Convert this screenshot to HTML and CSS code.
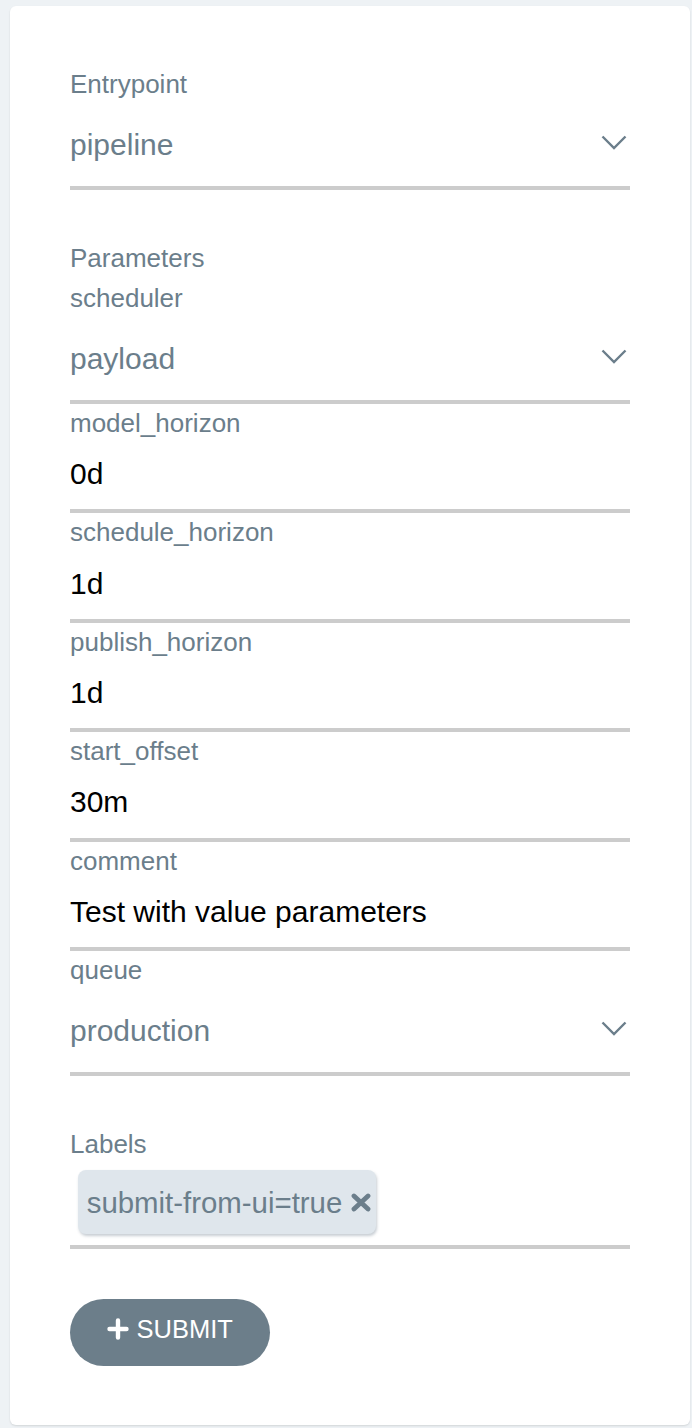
FILE: index.html
```html
<!DOCTYPE html>
<html lang="en">
<head>
<meta charset="utf-8">
<title>Submit</title>
<link rel="stylesheet" href="styles.css">
</head>
<body>
<form class="card">
  <section class="section">
    <div class="field">
      <div class="label">Entrypoint</div>
      <div class="control select">
        <span class="select-value">pipeline</span>
        <svg class="chevron" width="26" height="15" viewBox="0 0 26 15"><path d="M1.5 1.5 L13 13 L24.5 1.5" fill="none" stroke="#6b7e8b" stroke-width="2.4"/></svg>
      </div>
    </div>
  </section>

  <section class="section">
    <div class="heading">Parameters</div>
    <div class="field param">
      <div class="label">scheduler</div>
      <div class="control select">
        <span class="select-value">payload</span>
        <svg class="chevron" width="26" height="15" viewBox="0 0 26 15"><path d="M1.5 1.5 L13 13 L24.5 1.5" fill="none" stroke="#6b7e8b" stroke-width="2.4"/></svg>
      </div>
    </div>
    <div class="field param">
      <div class="label">model_horizon</div>
      <div class="control text"><span class="text-value">0d</span></div>
    </div>
    <div class="field param">
      <div class="label">schedule_horizon</div>
      <div class="control text"><span class="text-value">1d</span></div>
    </div>
    <div class="field param">
      <div class="label">publish_horizon</div>
      <div class="control text"><span class="text-value">1d</span></div>
    </div>
    <div class="field param">
      <div class="label">start_offset</div>
      <div class="control text"><span class="text-value">30m</span></div>
    </div>
    <div class="field param">
      <div class="label">comment</div>
      <div class="control text"><span class="text-value">Test with value parameters</span></div>
    </div>
    <div class="field param">
      <div class="label">queue</div>
      <div class="control select">
        <span class="select-value">production</span>
        <svg class="chevron" width="26" height="15" viewBox="0 0 26 15"><path d="M1.5 1.5 L13 13 L24.5 1.5" fill="none" stroke="#6b7e8b" stroke-width="2.4"/></svg>
      </div>
    </div>
  </section>

  <section class="section">
    <div class="field">
      <div class="label">Labels</div>
      <div class="chips">
        <span class="chip">
          <span class="chip-text">submit-from-ui=true</span>
          <svg class="chip-x" width="20" height="19" viewBox="0 0 20 19"><path d="M3 3 L17 16 M17 3 L3 16" fill="none" stroke="#6b7e8b" stroke-width="4.8" stroke-linecap="round"/></svg>
        </span>
      </div>
    </div>
  </section>

  <div class="actions">
    <button type="button" class="submit">
      <svg class="plus" width="22" height="22" viewBox="0 0 22 22"><path d="M11 2.5 V19.5 M2.5 11 H19.5" fill="none" stroke="#ffffff" stroke-width="4.4" stroke-linecap="round"/></svg>
      <span>SUBMIT</span>
    </button>
  </div>
</form>
</body>
</html>
```

FILE: styles.css
```css
html, body {
  margin: 0;
  padding: 0;
}

body {
  background: #eef2f5;
  font-family: "Liberation Sans", Arial, Helvetica, sans-serif;
  padding: 6px 2px 3px 10px;
}

.card {
  display: block;
  width: 680px;
  box-sizing: border-box;
  background: #ffffff;
  border-radius: 6px;
  box-shadow: 0 1px 2px rgba(0, 0, 0, 0.12);
  padding: 62.5px 60px 59.3px;
}

.section + .section {
  margin-top: 53px;
}

.label,
.heading {
  font-size: 26px;
  line-height: 30px;
  color: #6b7e8b;
}

.heading {
  margin-bottom: 9.5px;
}

.param {
  margin-top: 4px;
}

.control {
  border-bottom: 4px solid #cccccc;
}

.select {
  display: flex;
  justify-content: space-between;
  align-items: flex-start;
  padding: 28.5px 0 23px;
}

.select-value {
  font-size: 30px;
  line-height: 36px;
  color: #6b7e8b;
}

.chevron {
  display: block;
  margin-top: 7.5px;
  margin-right: 3px;
}

.text {
  padding: 18.2px 0 17.2px;
}

.text-value {
  display: block;
  font-size: 30px;
  line-height: 36px;
  color: #000000;
}

.chips {
  display: flex;
  padding: 11px 0 11px 8.3px;
  border-bottom: 4px solid #cccccc;
}

.chip {
  display: inline-flex;
  align-items: center;
  background: #dfe6ec;
  border-radius: 8px;
  box-shadow: 1px 2px 3px rgba(70, 90, 110, 0.3);
  padding: 14.5px 5px 12.8px 8.4px;
}

.chip-text {
  font-size: 29.4px;
  line-height: 36px;
  color: #6b7e8b;
}

.chip-x {
  display: block;
  margin-left: 9px;
}

.actions {
  margin-top: 50px;
}

.submit {
  display: inline-flex;
  align-items: center;
  justify-content: center;
  width: 200px;
  height: 67.4px;
  box-sizing: border-box;
  padding: 0 0 6px;
  border: none;
  border-radius: 34px;
  background: #6c7e8a;
  color: #ffffff;
  font-family: "Liberation Sans", Arial, Helvetica, sans-serif;
  font-size: 25.5px;
  line-height: 30px;
  gap: 7.5px;
}

.plus {
  display: block;
}
```
